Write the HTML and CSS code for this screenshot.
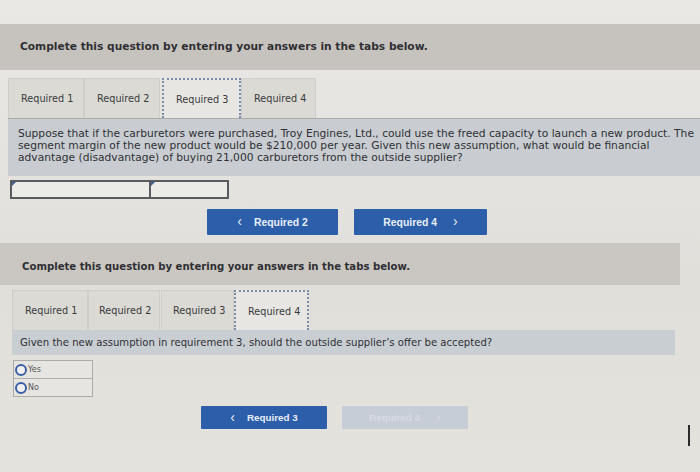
FILE: index.html
```html
<!DOCTYPE html>
<html>
<head>
<meta charset="utf-8">
<link rel="stylesheet" href="styles.css">
</head>
<body>
<div class="page">
  <div class="top"></div>
  <div class="band band1">Complete this question by entering your answers in the tabs below.</div>

  <div class="tabs tabs1">
    <div class="tab t1a">Required 1</div>
    <div class="tab t1b">Required 2</div>
    <div class="tab active t1c">Required 3</div>
    <div class="tab t1d">Required 4</div>
  </div>
  <div class="qbox qbox1">Suppose that if the carburetors were purchased, Troy Engines, Ltd., could use the freed capacity to launch a new product. The<br>segment margin of the new product would be $210,000 per year. Given this new assumption, what would be financial<br>advantage (disadvantage) of buying 21,000 carburetors from the outside supplier?</div>
  <div class="inputrow">
    <div class="cell cell-l"><span class="mark"></span></div>
    <div class="cell cell-r"><span class="mark"></span></div>
  </div>
  <div class="btnrow btnrow1">
    <div class="btn"><span class="chev">&lsaquo;</span>Required 2</div>
    <div class="btn btn-next">Required 4<span class="chev chev-r">&rsaquo;</span></div>
  </div>

  <div class="band band2">Complete this question by entering your answers in the tabs below.</div>
  <div class="tabs tabs2">
    <div class="tab t2a">Required 1</div>
    <div class="tab t2b">Required 2</div>
    <div class="tab t2c">Required 3</div>
    <div class="tab active t2d">Required 4</div>
  </div>
  <div class="qbox qbox2">Given the new assumption in requirement 3, should the outside supplier’s offer be accepted?</div>
  <div class="radios">
    <div class="radio"><span class="circle"></span>Yes</div>
    <div class="radio"><span class="circle"></span>No</div>
  </div>
  <div class="btnrow btnrow2">
    <div class="btn btn2"><span class="chev">&lsaquo;</span>Required 3</div>
    <div class="btn btn2 disabled">Required 4<span class="chev chev-r">&rsaquo;</span></div>
  </div>
  <div class="cursor"></div>
</div>
</body>
</html>
```

FILE: styles.css
```css
html, body {
  margin: 0;
  padding: 0;
}
body {
  background: #e3e1dc;
  font-family: "DejaVu Sans", Verdana, sans-serif;
  color: #3a3a3a;
}
.page {
  position: relative;
  width: 700px;
  height: 472px;
  overflow: hidden;
  background: linear-gradient(#e9e8e5, #e1dfda 60%, #e4e2dd);
}
.top {
  height: 24px;
}
.band {
  background: #c6c3bf;
  font-weight: bold;
  color: #2f2f33;
  display: flex;
  align-items: center;
  white-space: nowrap;
}
.band1 {
  height: 46px;
  padding-left: 20px;
  font-size: 10.65px;
  padding-bottom: 2px;
  box-sizing: border-box;
}
.band2 {
  margin-top: 8px;
  height: 42px;
  width: 680px;
  box-sizing: border-box;
  padding-left: 22px;
  padding-top: 4px;
  font-size: 10.15px;
  background: #cac7c2;
}
.tabs {
  display: flex;
  height: 40px;
}
.tabs1 {
  margin-top: 8px;
  margin-left: 8px;
}
.tabs2 {
  margin-top: 5px;
  margin-left: 12px;
}
.tab {
  box-sizing: border-box;
  height: 40px;
  display: flex;
  align-items: center;
  padding-left: 12px;
  font-size: 9.7px;
  color: #3a3a3c;
  background: #dcdad5;
  border: 1px solid #cfcdc8;
  border-bottom: none;
  white-space: nowrap;
}
.tab.active {
  background: #e7e6e3;
  border: 2px dotted #7d8cab;
  border-bottom: none;
}
.t1a { width: 76px; }
.t1b { width: 76px; }
.t1c { width: 79px; margin-left: 2px; }
.t1d { width: 75px; }
.t2a { width: 76px; }
.t2b { width: 72px; padding-left: 10px; }
.t2c { width: 73px; padding-left: 11px; margin-left: 1px; }
.t2d { width: 75px; }
.qbox {
  background: #c9cdd1;
  color: #2f3034;
}
.qbox1 {
  margin-left: 8px;
  height: 58px;
  box-sizing: border-box;
  border-top: 1px solid #a9aaab;
  padding: 9px 0 0 10px;
  font-size: 10.7px;
  line-height: 12px;
  white-space: nowrap;
}
.qbox2 {
  margin-left: 12px;
  width: 663px;
  height: 25px;
  box-sizing: border-box;
  padding-left: 8px;
  display: flex;
  align-items: center;
  font-size: 10.1px;
  white-space: nowrap;
  background: #c9ced3;
}
.inputrow {
  display: flex;
  margin-top: 4px;
  margin-left: 10px;
  width: 219px;
  height: 19px;
  box-sizing: border-box;
  border: 2px solid #5a5b5e;
  background: #ecebe8;
}
.cell {
  position: relative;
  height: 100%;
}
.cell-l {
  width: 137px;
  border-right: 2px solid #5a5b5e;
}
.cell-r {
  flex: 1;
}
.mark {
  position: absolute;
  left: 0;
  top: 0;
  width: 0;
  height: 0;
  border-top: 4px solid #3d5f9a;
  border-right: 4px solid transparent;
}
.btnrow {
  display: flex;
}
.btnrow1 {
  margin-top: 10px;
  margin-left: 207px;
  gap: 16px;
}
.btnrow2 {
  margin-top: 9px;
  margin-left: 201px;
  gap: 15px;
}
.btn {
  width: 131px;
  height: 26px;
  background: #2c5ea9;
  color: #e8eef8;
  font-family: "Liberation Sans", Arial, sans-serif;
  font-size: 10.4px;
  font-weight: bold;
  display: flex;
  align-items: center;
  justify-content: center;
  border-radius: 1px;
}
.btn-next {
  width: 133px;
}
.btn2 {
  width: 126px;
  height: 23px;
  font-size: 9.8px;
}
.chev {
  font-size: 14px;
  font-weight: normal;
  margin-right: 12px;
  margin-top: -2px;
}
.chev-r {
  margin-right: 0;
  margin-left: 16px;
}
.disabled {
  background: #c7cdd6;
  color: #d6dbe2;
}
.radios {
  margin-top: 5px;
  margin-left: 13px;
  width: 80px;
  box-sizing: border-box;
  border: 1px solid #aeaca8;
}
.radio {
  height: 17px;
  display: flex;
  align-items: center;
  font-size: 8px;
  color: #555;
  background: #e6e5e1;
}
.radio + .radio {
  border-top: 1px solid #aeaca8;
}
.circle {
  width: 8px;
  height: 8px;
  border: 2px solid #3a5fa6;
  border-radius: 50%;
  margin-left: 1px;
  margin-right: 1px;
  background: #f0f0f0;
}
.cursor {
  position: absolute;
  left: 688px;
  top: 425px;
  width: 1.5px;
  height: 21px;
  background: #2b2b2b;
}
```
